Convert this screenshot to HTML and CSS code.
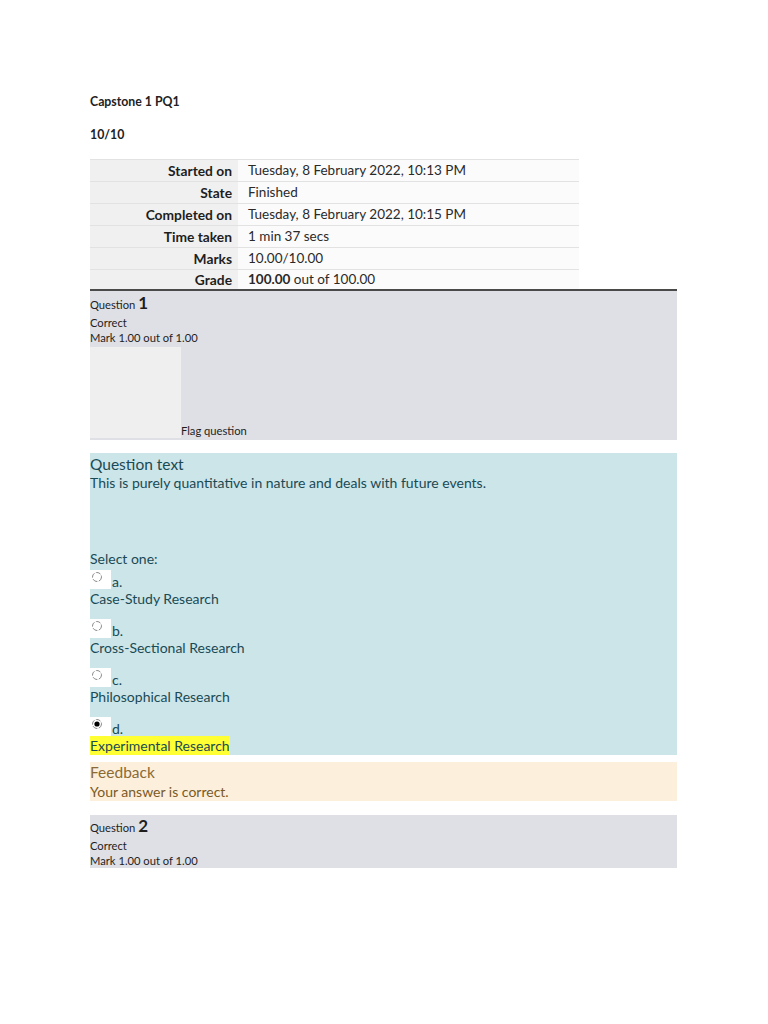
FILE: index.html
```html
<!DOCTYPE html>
<html lang="en">
<head>
<meta charset="utf-8">
<title>Capstone 1 PQ1</title>
<link rel="stylesheet" href="styles.css">
</head>
<body>
<div class="page">
  <h1 class="title">Capstone 1 PQ1</h1>
  <div class="score">10/10</div>

  <table class="summary">
    <tr><th>Started on</th><td>Tuesday, 8 February 2022, 10:13 PM</td></tr>
    <tr><th>State</th><td>Finished</td></tr>
    <tr><th>Completed on</th><td>Tuesday, 8 February 2022, 10:15 PM</td></tr>
    <tr><th>Time taken</th><td>1 min 37 secs</td></tr>
    <tr><th>Marks</th><td>10.00/10.00</td></tr>
    <tr><th>Grade</th><td><b>100.00</b> out of 100.00</td></tr>
  </table>

  <div class="info first">
    <div class="qno">Question <span class="num">1</span></div>
    <div class="line">Correct</div>
    <div class="line">Mark 1.00 out of 1.00</div>
    <div class="flag-row">
      <div class="flag-box"></div>
      <span class="flag-text">Flag question</span>
    </div>
  </div>

  <div class="formulation">
    <div class="qtitle">Question text</div>
    <div class="qtext">This is purely quantitative in nature and deals with future events.</div>
    <div class="select">Select one:</div>

    <div class="opt">
      <div class="opt-head">
        <span class="radio-box"><svg width="12" height="12" viewBox="0 0 12 12"><circle cx="6" cy="6" r="4.5" fill="#fff" stroke="#8a8a8a" stroke-width="1" stroke-dasharray="5 1.5"/></svg></span>
        <span class="letter">a.</span>
      </div>
      <div class="answer">Case-Study Research</div>
    </div>

    <div class="opt">
      <div class="opt-head">
        <span class="radio-box"><svg width="12" height="12" viewBox="0 0 12 12"><circle cx="6" cy="6" r="4.5" fill="#fff" stroke="#8a8a8a" stroke-width="1" stroke-dasharray="5 1.5"/></svg></span>
        <span class="letter">b.</span>
      </div>
      <div class="answer">Cross-Sectional Research</div>
    </div>

    <div class="opt">
      <div class="opt-head">
        <span class="radio-box"><svg width="12" height="12" viewBox="0 0 12 12"><circle cx="6" cy="6" r="4.5" fill="#fff" stroke="#8a8a8a" stroke-width="1" stroke-dasharray="5 1.5"/></svg></span>
        <span class="letter">c.</span>
      </div>
      <div class="answer">Philosophical Research</div>
    </div>

    <div class="opt last">
      <div class="opt-head">
        <span class="radio-box"><svg width="12" height="12" viewBox="0 0 12 12"><circle cx="6" cy="6" r="4.5" fill="#fff" stroke="#8a8a8a" stroke-width="1" stroke-dasharray="5 1.5"/><circle cx="6" cy="6" r="2.6" fill="#000"/></svg></span>
        <span class="letter">d.</span>
      </div>
      <div class="answer"><span class="hl">Experimental Research</span></div>
    </div>
  </div>

  <div class="feedback">
    <div class="fb-title">Feedback</div>
    <div class="fb-text">Your answer is correct.</div>
  </div>

  <div class="info second">
    <div class="qno">Question <span class="num">2</span></div>
    <div class="line">Correct</div>
    <div class="line">Mark 1.00 out of 1.00</div>
  </div>
</div>
</body>
</html>
```

FILE: styles.css
```css
html, body {
  margin: 0;
  padding: 0;
  background: #ffffff;
}

body {
  font-family: Lato, "Open Sans", "Liberation Sans", sans-serif;
  color: #222222;
}

.page {
  width: 587px;
  padding: 94px 0 0 90px;
}

.title {
  margin: 0;
  font-size: 12.3px;
  font-weight: bold;
  line-height: 16px;
}

.score {
  margin-top: 17px;
  font-size: 12.3px;
  font-weight: bold;
  line-height: 16px;
}

.summary {
  margin-top: 16px;
  width: 489px;
  border-collapse: collapse;
  font-size: 13.5px;
}

.summary th,
.summary td {
  height: 21px;
  padding: 0;
  border-top: 1px solid #e2e2e2;
  line-height: 21px;
}

.summary th {
  width: 142px;
  padding-right: 6px;
  text-align: right;
  font-weight: bold;
  font-size: 13.8px;
  background: #f0f0f0;
  color: #1e1e1e;
}

.summary td {
  padding-left: 10px;
  background: #fbfbfb;
  color: #2a2a2a;
}

.summary tr:last-child th,
.summary tr:last-child td {
  height: 19px;
  line-height: 19px;
}

.info {
  background: #dee0e5;
  font-size: 11.2px;
  color: #1e1e1e;
}

.info.first {
  border-top: 2px solid #4a4a4a;
  padding: 2px 0 0 0;
}

.info.second {
  margin-top: 14px;
  padding-top: 1px;
}

.qno {
  line-height: 20px;
  font-size: 11.2px;
}

.num {
  font-size: 17px;
  font-weight: bold;
}

.line {
  line-height: 15px;
}

.flag-row {
  display: flex;
  align-items: flex-end;
  margin-top: 2px;
  padding-bottom: 2px;
}

.flag-box {
  width: 91px;
  height: 91px;
  background: #efefef;
}

.flag-text {
  line-height: 14px;
  font-size: 11.2px;
}

.formulation {
  margin-top: 13px;
  background: #cce5e9;
  color: #1a4a54;
  font-size: 14px;
}

.qtitle {
  padding-top: 1px;
  font-size: 15.5px;
  line-height: 20px;
}

.qtext {
  line-height: 18px;
}

.select {
  margin-top: 58px;
  line-height: 18px;
}

.opt {
  margin-bottom: 9px;
}

.opt.last {
  margin-bottom: 0;
}

.opt-head {
  display: flex;
  align-items: flex-end;
  height: 21px;
}

.radio-box {
  display: flex;
  align-items: flex-start;
  justify-content: flex-start;
  width: 21px;
  height: 19px;
  padding: 1px 0 0 1px;
  box-sizing: border-box;
  background: #ffffff;
}

.radio-box svg {
  display: block;
}

.letter {
  margin-left: 1px;
  line-height: 14px;
}

.answer {
  line-height: 19px;
}

.hl {
  background: #ffff33;
  display: inline-block;
}

.feedback {
  margin-top: 7px;
  background: #fcefdc;
  color: #7a5a25;
  font-size: 14px;
}

.fb-title {
  font-size: 15.5px;
  line-height: 20px;
  color: #8b6a35;
}

.fb-text {
  line-height: 19px;
}
```
